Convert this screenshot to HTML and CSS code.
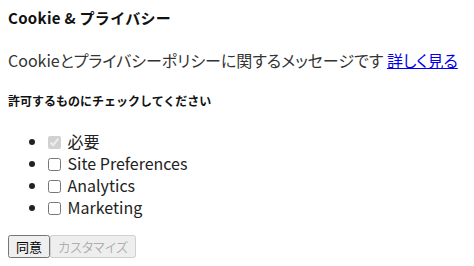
FILE: index.html
```html
<!DOCTYPE html>
<html lang="ja">
<head>
<meta charset="utf-8">
<link rel="stylesheet" href="styles.css">
</head>
<body>
<div class="consent">
  <h2 class="title">Cookie &amp; プライバシー</h2>
  <p class="message">Cookieとプライバシーポリシーに関するメッセージです <a href="#" class="more">詳しく見る</a></p>
  <h4 class="prompt">許可するものにチェックしてください</h4>
  <ul class="options">
    <li class="option"><label><input type="checkbox" checked disabled> 必要</label></li>
    <li class="option"><label><input type="checkbox"> Site Preferences</label></li>
    <li class="option"><label><input type="checkbox"> Analytics</label></li>
    <li class="option"><label><input type="checkbox"> Marketing</label></li>
  </ul>
  <div class="actions">
    <button class="btn" type="button">同意</button><button class="btn" type="button" disabled>カスタマイズ</button>
  </div>
</div>
</body>
</html>
```
FILE: styles.css
```css
html, body {
  background: #ffffff;
}
body {
  margin: 8px;
  font-family: "Noto Sans CJK JP", "Noto Sans", sans-serif;
  font-feature-settings: "palt";
  color: #222;
}
.title {
  margin: 0;
  font-size: 15px;
  line-height: 20px;
  font-weight: bold;
  letter-spacing: 0.3px;
  font-feature-settings: normal;
  color: #111;
}
.message {
  margin: 20px 0 0;
  font-size: 16px;
  line-height: 24px;
  color: #333;
}
.more {
  color: #0000ee;
}
.prompt {
  margin: 20px 0 0;
  font-size: 12px;
  line-height: 18px;
  font-weight: bold;
  font-feature-settings: normal;
  color: #111;
}
.options {
  margin: 20px 0 0;
  padding-left: 40px;
  font-size: 16px;
}
.option {
  line-height: 22px;
}
.option input {
  margin: 0 3px 0 0;
  vertical-align: -1px;
}
.actions {
  margin-top: 17px;
  display: flex;
}
.btn {
  font-family: "Noto Sans CJK JP", sans-serif;
  font-feature-settings: "palt";
  font-size: 13px;
  height: 23px;
  padding: 0 6px;
}
```
